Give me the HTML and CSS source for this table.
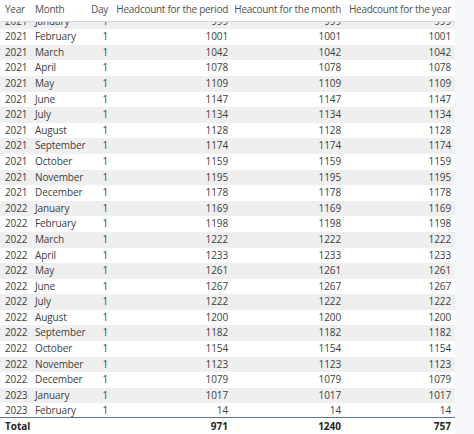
FILE: index.html
```html
<!DOCTYPE html>
<html>
<head>
<meta charset="utf-8">
<link rel="stylesheet" href="styles.css">
</head>
<body>
<div class="visual">
  <div class="table">
    <div class="row head">
      <div class="c l">Year</div><div class="c l">Month</div><div class="c r">Day</div>
      <div class="c r">Headcount for the period</div><div class="c r">Heacount for the month</div><div class="c r">Headcount for the year</div>
    </div>
    <div class="viewport">
      <div class="rows">
        <div class="row"><div class="c l">2021</div><div class="c l">January</div><div class="c r">1</div><div class="c r">999</div><div class="c r">999</div><div class="c r">999</div></div>
        <div class="row"><div class="c l">2021</div><div class="c l">February</div><div class="c r">1</div><div class="c r">1001</div><div class="c r">1001</div><div class="c r">1001</div></div>
        <div class="row"><div class="c l">2021</div><div class="c l">March</div><div class="c r">1</div><div class="c r">1042</div><div class="c r">1042</div><div class="c r">1042</div></div>
        <div class="row"><div class="c l">2021</div><div class="c l">April</div><div class="c r">1</div><div class="c r">1078</div><div class="c r">1078</div><div class="c r">1078</div></div>
        <div class="row"><div class="c l">2021</div><div class="c l">May</div><div class="c r">1</div><div class="c r">1109</div><div class="c r">1109</div><div class="c r">1109</div></div>
        <div class="row"><div class="c l">2021</div><div class="c l">June</div><div class="c r">1</div><div class="c r">1147</div><div class="c r">1147</div><div class="c r">1147</div></div>
        <div class="row"><div class="c l">2021</div><div class="c l">July</div><div class="c r">1</div><div class="c r">1134</div><div class="c r">1134</div><div class="c r">1134</div></div>
        <div class="row"><div class="c l">2021</div><div class="c l">August</div><div class="c r">1</div><div class="c r">1128</div><div class="c r">1128</div><div class="c r">1128</div></div>
        <div class="row"><div class="c l">2021</div><div class="c l">September</div><div class="c r">1</div><div class="c r">1174</div><div class="c r">1174</div><div class="c r">1174</div></div>
        <div class="row"><div class="c l">2021</div><div class="c l">October</div><div class="c r">1</div><div class="c r">1159</div><div class="c r">1159</div><div class="c r">1159</div></div>
        <div class="row"><div class="c l">2021</div><div class="c l">November</div><div class="c r">1</div><div class="c r">1195</div><div class="c r">1195</div><div class="c r">1195</div></div>
        <div class="row"><div class="c l">2021</div><div class="c l">December</div><div class="c r">1</div><div class="c r">1178</div><div class="c r">1178</div><div class="c r">1178</div></div>
        <div class="row"><div class="c l">2022</div><div class="c l">January</div><div class="c r">1</div><div class="c r">1169</div><div class="c r">1169</div><div class="c r">1169</div></div>
        <div class="row"><div class="c l">2022</div><div class="c l">February</div><div class="c r">1</div><div class="c r">1198</div><div class="c r">1198</div><div class="c r">1198</div></div>
        <div class="row"><div class="c l">2022</div><div class="c l">March</div><div class="c r">1</div><div class="c r">1222</div><div class="c r">1222</div><div class="c r">1222</div></div>
        <div class="row"><div class="c l">2022</div><div class="c l">April</div><div class="c r">1</div><div class="c r">1233</div><div class="c r">1233</div><div class="c r">1233</div></div>
        <div class="row"><div class="c l">2022</div><div class="c l">May</div><div class="c r">1</div><div class="c r">1261</div><div class="c r">1261</div><div class="c r">1261</div></div>
        <div class="row"><div class="c l">2022</div><div class="c l">June</div><div class="c r">1</div><div class="c r">1267</div><div class="c r">1267</div><div class="c r">1267</div></div>
        <div class="row"><div class="c l">2022</div><div class="c l">July</div><div class="c r">1</div><div class="c r">1222</div><div class="c r">1222</div><div class="c r">1222</div></div>
        <div class="row"><div class="c l">2022</div><div class="c l">August</div><div class="c r">1</div><div class="c r">1200</div><div class="c r">1200</div><div class="c r">1200</div></div>
        <div class="row"><div class="c l">2022</div><div class="c l">September</div><div class="c r">1</div><div class="c r">1182</div><div class="c r">1182</div><div class="c r">1182</div></div>
        <div class="row"><div class="c l">2022</div><div class="c l">October</div><div class="c r">1</div><div class="c r">1154</div><div class="c r">1154</div><div class="c r">1154</div></div>
        <div class="row"><div class="c l">2022</div><div class="c l">November</div><div class="c r">1</div><div class="c r">1123</div><div class="c r">1123</div><div class="c r">1123</div></div>
        <div class="row"><div class="c l">2022</div><div class="c l">December</div><div class="c r">1</div><div class="c r">1079</div><div class="c r">1079</div><div class="c r">1079</div></div>
        <div class="row"><div class="c l">2023</div><div class="c l">January</div><div class="c r">1</div><div class="c r">1017</div><div class="c r">1017</div><div class="c r">1017</div></div>
        <div class="row"><div class="c l">2023</div><div class="c l">February</div><div class="c r">1</div><div class="c r">14</div><div class="c r">14</div><div class="c r">14</div></div>
      </div>
    </div>
    <div class="row total">
      <div class="c l">Total</div><div class="c l"></div><div class="c r"></div>
      <div class="c r">971</div><div class="c r">1240</div><div class="c r">757</div>
    </div>
  </div>
</div>
</body>
</html>
```
FILE: styles.css
```css
html, body {
  margin: 0;
  padding: 0;
  background: #f6f8fb;
}
.visual {
  width: 474px;
  height: 434px;
  overflow: hidden;
  display: flex;
}
.table {
  width: 455px;
  background: #ffffff;
  display: flex;
  flex-direction: column;
  font-family: "Open Sans", "Noto Sans", sans-serif;
  font-size: 10px;
  color: #404040;
  letter-spacing: -0.12px;
}
.row {
  display: grid;
  grid-template-columns: 30px 56px 26px 120px 113px 110px;
  height: 15.6px;
  line-height: 15.6px;
  white-space: nowrap;
}
.c.l { padding-left: 5px; text-align: left; }
.c.r { padding-right: 4px; text-align: right; }
.head {
  height: 21px;
  line-height: 19px;
  border-bottom: 1px solid #d6d6d6;
  color: #505050;
  letter-spacing: -0.28px;
}
.viewport {
  height: 395px;
  overflow: hidden;
}
.rows {
  margin-top: -8.4px;
}
.rows .row:nth-child(odd) {
  background: #efefef;
}
.total {
  border-top: 1.5px solid #5d7591;
  height: 15.5px;
  line-height: 17px;
  font-weight: 700;
  color: #252423;
  letter-spacing: 0;
}
```
